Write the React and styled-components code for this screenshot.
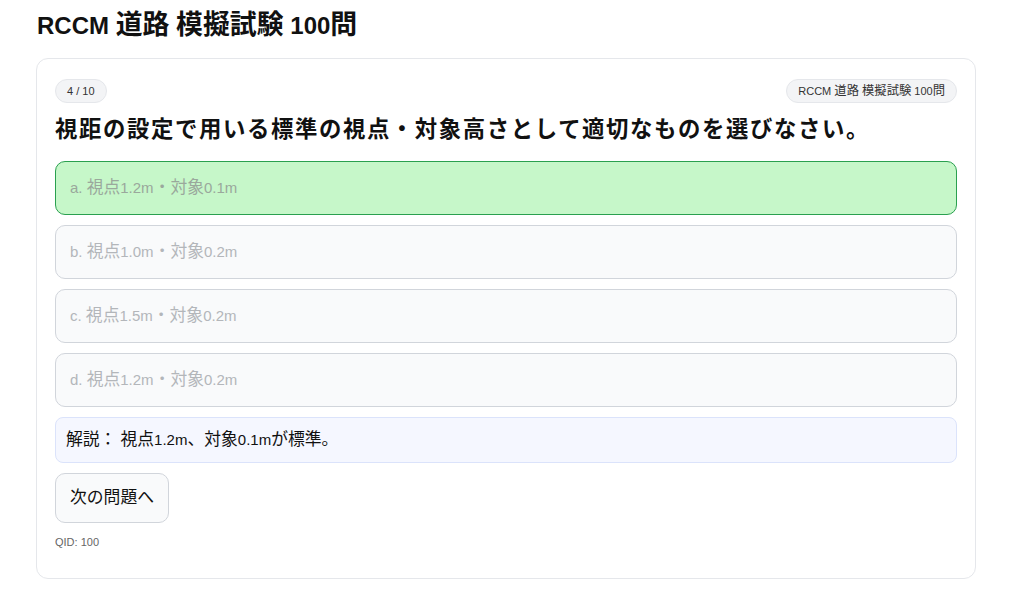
import React from "react";
import styled, { createGlobalStyle } from "styled-components";

const GlobalStyle = createGlobalStyle`
 body {
  margin: 0;
  background: #ffffff;
  color: #111111;
  font-family: "Liberation Sans", Arial, "Noto Sans CJK JP", sans-serif;
 }
`;

// the Japanese glyphs in the shot come from a larger-looking font
const Wide = styled.span`
 font-size: 1.12em;
 line-height: 1;
`;

const jp = text =>
 text.split(/([\u3000-\u30ff\u4e00-\u9fff\uff00-\uffef]+)/).map((part, i) =>
  i % 2 ? <Wide key={i}>{part}</Wide> : part
 );

const Page = styled.div`
 padding: 10px 0 0 36px;
 width: 940px;
`;

const Heading = styled.h1`
 margin: 0 0 16px 1px;
 font-size: 24px;
 font-weight: 700;
 line-height: 32px;
 color: #111;
`;

const Card = styled.section`
 border: 1px solid #e5e7eb;
 border-radius: 12px;
 padding: 20px 18px 30px 18px;
 display: flex;
 flex-direction: column;
`;

const TopRow = styled.div`
 display: flex;
 justify-content: space-between;
 align-items: center;
`;

const Pill = styled.span`
 display: inline-block;
 height: 24px;
 line-height: 22px;
 padding: 0 11px;
 border-radius: 999px;
 background: #f3f4f6;
 border: 1px solid #e5e7eb;
 font-size: 11px;
 color: #333;
 box-sizing: border-box;
 white-space: nowrap;
`;

const Question = styled.h2`
 margin: 13px 0 17px 0;
 font-size: 20px;
 font-weight: 700;
 line-height: 28px;
 letter-spacing: 1.6px;
 color: #111;
 white-space: nowrap;
`;

const Options = styled.div`
 display: flex;
 flex-direction: column;
 gap: 10px;
`;

const Option = styled.button`
 height: 54px;
 box-sizing: border-box;
 text-align: left;
 padding: 0 14px;
 border-radius: 10px;
 font-family: inherit;
 font-size: 15px;
 border: 1px solid ${p => (p.$correct ? "#2aa04f" : "#d1d5db")};
 background: ${p => (p.$correct ? "#c6f7c9" : "#f9fafb")};
 color: ${p => (p.$correct ? "#9aa89c" : "#b3b6ba")};
 cursor: default;
`;

const Explain = styled.div`
 margin-top: 10px;
 height: 46px;
 box-sizing: border-box;
 line-height: 44px;
 padding: 0 10px;
 border-radius: 8px;
 background: #f5f7ff;
 border: 1px solid #dbe3fb;
 font-size: 15px;
 color: #111;
`;

const NextButton = styled.button`
 margin-top: 10px;
 align-self: flex-start;
 width: 114px;
 height: 50px;
 border-radius: 10px;
 border: 1px solid #d1d5db;
 background: #f9fafb;
 font-family: inherit;
 font-size: 15px;
 color: #111;
`;

const Qid = styled.div`
 margin-top: 13px;
 font-size: 11px;
 color: #666;
`;

const choices = [
 { label: "a. 視点1.2m・対象0.1m", correct: true },
 { label: "b. 視点1.0m・対象0.2m" },
 { label: "c. 視点1.5m・対象0.2m" },
 { label: "d. 視点1.2m・対象0.2m" },
];

export default function App() {
 return (
  <>
   <GlobalStyle />
   <Page>
    <Heading>{jp("RCCM 道路 模擬試験 100問")}</Heading>
    <Card>
     <TopRow>
      <Pill>4 / 10</Pill>
      <Pill>{jp("RCCM 道路 模擬試験 100問")}</Pill>
     </TopRow>
     <Question>{jp("視距の設定で用いる標準の視点・対象高さとして適切なものを選びなさい。")}</Question>
     <Options>
      {choices.map(c => (
       <Option key={c.label} $correct={c.correct} disabled>
        {jp(c.label)}
       </Option>
      ))}
     </Options>
     <Explain>{jp("解説： 視点1.2m、対象0.1mが標準。")}</Explain>
     <NextButton>{jp("次の問題へ")}</NextButton>
     <Qid>QID: 100</Qid>
    </Card>
   </Page>
  </>
 );
}
